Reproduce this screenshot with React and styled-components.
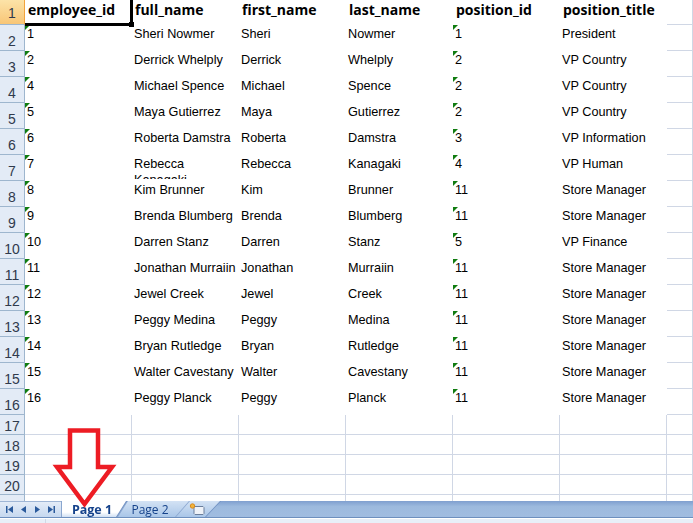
import React from 'react';
import styled, { createGlobalStyle } from 'styled-components';

const Global = createGlobalStyle`
    html, body {
        margin: 0;
        padding: 0;
        background: #fff;
    }
`;

const Window = styled.div`
    position: relative;
    width: 693px;
    height: 523px;
    overflow: hidden;
    display: flex;
    flex-direction: column;
    background: #fff;
`;

const Sheet = styled.div`
    display: grid;
    grid-template-columns: 25px repeat(5, 107px) 107px 1fr;
    grid-template-rows: 25px repeat(15, 26px) repeat(4, 20px) 7px;
    height: 501px;
`;

const RowHead = styled.div`
    display: flex;
    align-items: center;
    justify-content: center;
    box-sizing: border-box;
    padding-top: ${p => (p.$tall ? '7px' : '2px')};
    font: 14px "Liberation Sans", Arial, sans-serif;
    color: #303a4c;
    background: ${p => (p.$active ? 'linear-gradient(#fce3a8, #f8c677)' : '#e3ebf6')};
    border-right: 1px solid ${p => (p.$active ? '#f2a33c' : '#9eb6ce')};
    border-bottom: 1px solid #9eb6ce;
`;

const HeadCell = styled.div`
    box-sizing: border-box;
    padding-left: 3px;
    font: bold 14px/20px "Open Sans", sans-serif;
    color: #000;
    white-space: nowrap;
`;

const Cell = styled.div`
    position: relative;
    overflow: hidden;
    box-sizing: border-box;
    height: 24px;
    padding: 1px 2px 0 2px;
    font: 12.7px/16px "Liberation Sans", Arial, sans-serif;
    color: #000;
    white-space: ${p => (p.$wrap ? 'normal' : 'nowrap')};
`;

const Empty = styled.div`
    box-sizing: border-box;
    border-right: 1px solid #d0d7e5;
    border-bottom: 1px solid #d0d7e5;
`;

const Flag = styled.span`
    position: absolute;
    top: 0;
    left: 0;
    width: 0;
    height: 0;
    border-top: 5px solid #107c10;
    border-right: 5px solid transparent;
`;

const Selection = styled.div`
    position: absolute;
    z-index: 1;
    top: 0;
    left: 25px;
    width: 108px;
    height: 26px;
    box-sizing: border-box;
    border-right: 3px solid #000;
    border-bottom: 3px solid #000;
`;

const Handle = styled.span`
    position: absolute;
    right: -4px;
    bottom: -4px;
    width: 5px;
    height: 5px;
    background: #000;
`;

const Tabs = styled.div`
    display: flex;
    height: 16px;
    background: linear-gradient(#7f9fcf, #9dbade 35%, #a0bce0);
    border-bottom: 1px solid #6d8fbe;
`;

const Nav = styled.div`
    display: flex;
    align-items: center;
    justify-content: space-around;
    box-sizing: border-box;
    width: 62px;
    padding: 0 2px;
    background: linear-gradient(#e3ecf8, #c6d8ef);
    border-top: 1px solid #9fb6d6;
    border-right: 1px solid #8fa9cd;
`;

const Tab = styled.div`
    position: relative;
    z-index: ${p => (p.$active ? 2 : 1)};
    width: ${p => p.$width}px;
    margin-left: ${p => p.$gap}px;
    filter: drop-shadow(1px 0 0 #6f8fc0) drop-shadow(-1px 0 0 #8aa6cf);
`;

const TabFace = styled.div`
    display: flex;
    align-items: center;
    justify-content: center;
    box-sizing: border-box;
    height: 100%;
    padding-right: ${p => p.$pad}px;
    font: ${p => (p.$active ? 'bold 12.5px' : 'normal 12px')} "Open Sans", sans-serif;
    color: #15428b;
    background: ${p => (p.$active ? 'linear-gradient(#ffffff 70%, #cfdff3)' : 'linear-gradient(#d3e2f4, #a9c6e8)')};
    clip-path: polygon(${p => p.$left}px 0, 100% 0, calc(100% - ${p => p.$right}px) 100%, 0 100%);
`;

const Footer = styled.div`
    flex: 1;
    display: flex;
    background: #e8eff8;
    border-top: 1px solid #fff;
`;

const FooterPart = styled.div`
    width: 45px;
    border-right: 1px solid #d0d9e6;
`;

const Arrow = styled.svg`
    position: absolute;
    z-index: 3;
    left: 50px;
    top: 425px;
`;

const rows = [
    ['1', 'Sheri Nowmer', 'Sheri', 'Nowmer', '1', 'President'],
    ['2', 'Derrick Whelply', 'Derrick', 'Whelply', '2', 'VP Country'],
    ['4', 'Michael Spence', 'Michael', 'Spence', '2', 'VP Country'],
    ['5', 'Maya Gutierrez', 'Maya', 'Gutierrez', '2', 'VP Country'],
    ['6', 'Roberta Damstra', 'Roberta', 'Damstra', '3', 'VP Information'],
    ['7', 'Rebecca Kanagaki', 'Rebecca', 'Kanagaki', '4', 'VP Human'],
    ['8', 'Kim Brunner', 'Kim', 'Brunner', '11', 'Store Manager'],
    ['9', 'Brenda Blumberg', 'Brenda', 'Blumberg', '11', 'Store Manager'],
    ['10', 'Darren Stanz', 'Darren', 'Stanz', '5', 'VP Finance'],
    ['11', 'Jonathan Murraiin', 'Jonathan', 'Murraiin', '11', 'Store Manager'],
    ['12', 'Jewel Creek', 'Jewel', 'Creek', '11', 'Store Manager'],
    ['13', 'Peggy Medina', 'Peggy', 'Medina', '11', 'Store Manager'],
    ['14', 'Bryan Rutledge', 'Bryan', 'Rutledge', '11', 'Store Manager'],
    ['15', 'Walter Cavestany', 'Walter', 'Cavestany', '11', 'Store Manager'],
    ['16', 'Peggy Planck', 'Peggy', 'Planck', '11', 'Store Manager'],
];

const headers = ['employee_id', 'full_name', 'first_name', 'last_name', 'position_id', 'position_title'];

const NavIcon = ({ d }) => (
    <svg width="9" height="9" viewBox="0 0 9 9">
        <path d={d} fill="#2a5a9c" />
    </svg>
);

const App = () => (
    <Window>
        <Global />
        <Sheet>
            <RowHead $active>1</RowHead>
            {headers.map(h => <HeadCell key={h}>{h}</HeadCell>)}
            <Empty />
            {rows.map((row, r) => (
                <React.Fragment key={row[0]}>
                    <RowHead $tall>{r + 2}</RowHead>
                    {row.map((text, c) => (
                        <Cell key={c} $wrap={c === 1}>
                            {(c === 0 || c === 4) && <Flag />}
                            {text}
                        </Cell>
                    ))}
                    <Empty />
                </React.Fragment>
            ))}
            {[17, 18, 19, 20].map(n => (
                <React.Fragment key={n}>
                    <RowHead>{n}</RowHead>
                    {[0, 1, 2, 3, 4, 5, 6].map(c => <Empty key={c} />)}
                </React.Fragment>
            ))}
            <RowHead />
            {[0, 1, 2, 3, 4, 5, 6].map(c => <Empty key={c} />)}
        </Sheet>
        <Selection><Handle /></Selection>
        <Tabs>
            <Nav>
                <NavIcon d="M1 1h1.500v7H1zM8 1v7L3 4.500z" />
                <NavIcon d="M7 1v7L2 4.500z" />
                <NavIcon d="M2 1v7l5-3.500z" />
                <NavIcon d="M1 1v7l5-3.500zM6.500 1H8v7H6.500z" />
            </Nav>
            <Tab $active $width={64} $gap={0}>
                <TabFace $active $left={0} $right={10} $pad={4}>Page 1</TabFace>
            </Tab>
            <Tab $width={72} $gap={-8}>
                <TabFace $left={10} $right={14} $pad={8}>Page 2</TabFace>
            </Tab>
            <Tab $width={44} $gap={-14}>
                <TabFace $left={14} $right={15} $pad={2}>
                    <svg width="16" height="13" viewBox="0 0 16 13">
                        <path d="M5 3.500h9l1 1v6l-1 1H6l-1-1z" fill="#eef2f8" stroke="#6b7f9c" />
                        <circle cx="3.500" cy="3" r="2.200" fill="#f0b43c" stroke="#d98a1e" strokeWidth="1" />
                    </svg>
                </TabFace>
            </Tab>
        </Tabs>
        <Footer>
            <FooterPart />
        </Footer>
        <Arrow width="68" height="85" viewBox="0 0 68 85">
            <path d="M20 5.500H48V42H62L34.500 79 7 42H20z" fill="#fff" stroke="#ed1c24" strokeWidth="4.500" />
        </Arrow>
    </Window>
);

export default App;
